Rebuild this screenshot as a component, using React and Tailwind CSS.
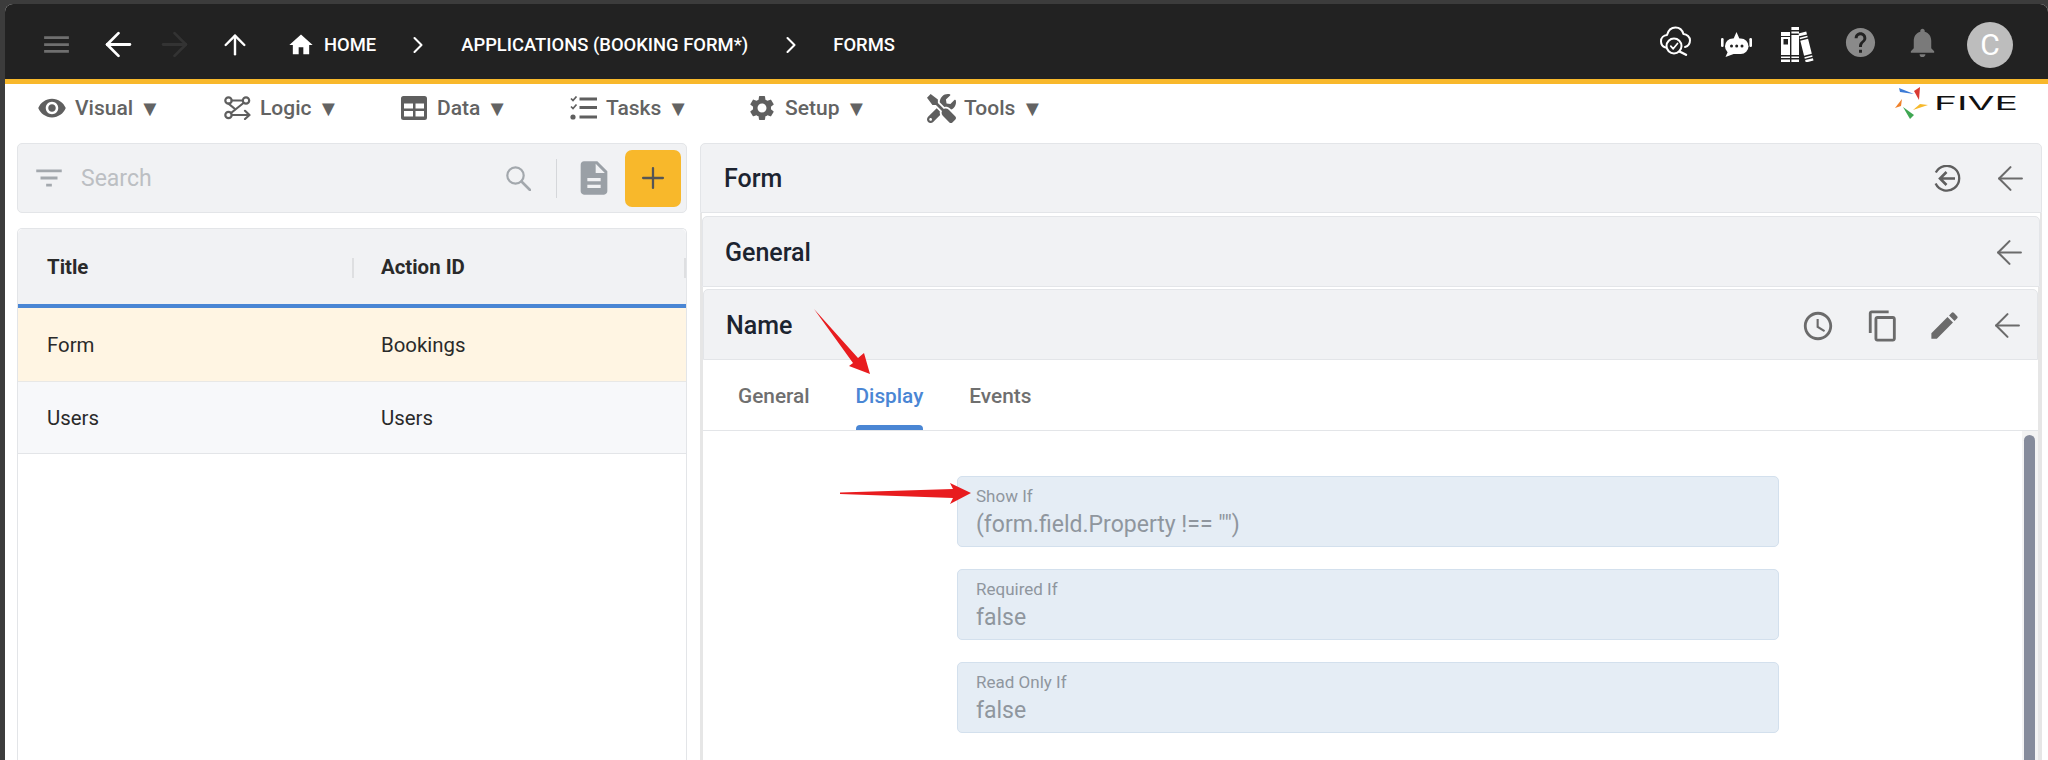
import React from "react";
import {
  MdMenu, MdHome, MdHelp, MdNotifications,
  MdRemoveRedEye, MdSettings, MdFilterList, MdDescription,
  MdOutlineAccessTime, MdContentCopy, MdEdit,
} from "react-icons/md";
import { FaTools } from "react-icons/fa";
import { ChevronRight, ArrowLeft, ArrowRight, ArrowUp, Plus } from "lucide-react";

const CloudIcon = () => (
  <svg width="31" height="30" viewBox="0 0 31 30" fill="none" stroke="#fff" strokeWidth="2" strokeLinecap="round" strokeLinejoin="round">
    <path d="M5.5 21.5C2.5 20.5 1 18 1 15.2C1 11.8 3.6 9.2 7 9C8.2 4.5 11.5 1.5 15.5 1.5C19.5 1.5 22.4 4.3 23.4 8C27 8.2 30 10.8 30 14.3C30 17.8 27.8 20.3 25 21" />
    <circle cx="14" cy="20" r="7.5" />
    <path d="M19.5 25.5L26 28.8" strokeWidth="2.4" />
    <path d="M10.8 20.2L13.2 22.8L17.5 17.5" strokeWidth="1.7" />
  </svg>
);

const BotIcon = () => (
  <svg width="31" height="25" viewBox="0 0 31 25" fill="#fff">
    <path d="M15.5 0L19 8H12Z" />
    <rect x="4" y="6.5" width="23.5" height="15.5" rx="7.7" />
    <path d="M8 17L4.5 25L14 21.5Z" />
    <rect x="0" y="6" width="2.6" height="9" rx="1.2" />
    <rect x="28.4" y="6" width="2.6" height="9" rx="1.2" />
    <circle cx="10.5" cy="14" r="1.5" fill="#222" />
    <circle cx="15.7" cy="14" r="1.5" fill="#222" />
    <circle cx="21" cy="14" r="1.5" fill="#222" />
  </svg>
);

const BooksIcon = () => (
  <svg width="35" height="35" viewBox="0 0 35 35" fill="#fff">
    <path d="M0 5H9V9H0ZM0 10H9V28H0ZM0 29.5H9V31H0ZM0 32.5H9V35H0Z" />
    <rect x="2.5" y="12" width="4.5" height="5.5" fill="#222" />
    <path d="M10.4 0H18V3H10.4ZM10.4 4.5H18V6.5H10.4ZM10.4 8H18V28H10.4ZM10.4 29.5H18V31H10.4ZM10.4 32.5H18V35H10.4Z" />
    <g transform="rotate(-14 25 20)">
      <path d="M21 5H29V8H21ZM21 9.5H29V11H21ZM21 12.5H29V28H21ZM21 29.5H29V31H21ZM21 32.5H29V35H21Z" />
    </g>
  </svg>
);

const LogicIcon = () => (
  <svg width="27" height="24" viewBox="0 0 27 24" fill="none" stroke="#5f5f5f" strokeWidth="2.2" strokeLinejoin="round" strokeLinecap="round">
    <circle cx="4.5" cy="4.5" r="3.2" />
    <circle cx="22" cy="4.5" r="3.2" />
    <circle cx="4.5" cy="19" r="3.2" />
    <path d="M7.7 4.5H18.8" />
    <path d="M19.5 7L7 17" />
    <path d="M7.7 19H25.5M21 14.8L25.5 19L21 23" />
    <path d="M4.5 7.7L11 13" />
  </svg>
);

const TableIcon = () => (
  <svg width="26" height="24" viewBox="0 0 26 24" fill="#5f5f5f">
    <path fillRule="evenodd" d="M2.5 0H23.5A2.5 2.5 0 0 1 26 2.5V21.5A2.5 2.5 0 0 1 23.5 24H2.5A2.5 2.5 0 0 1 0 21.5V2.5A2.5 2.5 0 0 1 2.5 0ZM3 7.5V12.5H12V7.5ZM14.5 7.5V12.5H23V7.5ZM3 15V20.5H12V15ZM14.5 15V20.5H23V15Z" />
  </svg>
);

const TasksIcon = () => (
  <svg width="27" height="24" viewBox="0 0 27 24" fill="#5f5f5f">
    <rect x="9.5" y="1.5" width="17.5" height="3" />
    <rect x="9.5" y="10" width="17.5" height="3" />
    <rect x="9.5" y="19.5" width="17.5" height="3" />
    <path d="M1 2.5L3 4.5L6.5 0.5" fill="none" stroke="#5f5f5f" strokeWidth="1.7" />
    <path d="M1 10.5L3 12.5L6.5 8.5" fill="none" stroke="#5f5f5f" strokeWidth="1.7" />
    <circle cx="3" cy="21" r="2.6" />
  </svg>
);

const CircleBack = () => (
  <svg width="27" height="27" viewBox="0 0 27 27" fill="none" stroke="#5f5f5f" strokeWidth="2.3">
    <path d="M1.8 7.5A12.4 12.4 0 1 1 1.6 18.5" />
    <path d="M21 13.5H6.5M12.5 7L6 13.5L12.5 20" strokeWidth="2.6" />
  </svg>
);

const SearchIcon = () => (
  <svg width="25" height="25" viewBox="0 0 25 25" fill="none" stroke="#a3a8ad" strokeWidth="2.2" strokeLinecap="round" className="ml-auto">
    <circle cx="9.5" cy="9.5" r="8.2" />
    <path d="M15.5 15.5L24 24" strokeWidth="2.6" />
  </svg>
);

const Logo = () => (
  <svg width="124" height="33" viewBox="1894 87 124 33">
    <path d="M1899 88L1914 94L1900 92Z" fill="#3d7bd6" />
    <path d="M1920 87L1914 91L1919 100Z" fill="#d93a32" />
    <path d="M1928 105L1920 104L1913 110Z" fill="#f6b92c" />
    <path d="M1903 107L1914 115L1910 119Z" fill="#3fa652" />
    <path d="M1895 108L1902 99L1901 106Z" fill="#f0812a" />
    <text x="1934" y="110" fontSize="18" textLength="84" lengthAdjust="spacingAndGlyphs" fill="#111" className="font-['Inter'] font-normal">FIVE</text>
  </svg>
);

const Annotations = () => (
  <svg className="absolute left-0 top-0 pointer-events-none" width="2048" height="760" viewBox="0 0 2048 760" fill="#e81c1f">
    <path d="M814 309L858 358L864 353L870 374L849 366L853 363Z" />
    <path d="M840 492.5L953 489L950 483L971 493L950 504L953 498L840 494Z" />
  </svg>
);

const menu = [
  { label: "Visual", w: "w-[185px]", icon: <MdRemoveRedEye size={32} color="#5f5f5f" /> },
  { label: "Logic", w: "w-[177px]", icon: <LogicIcon /> },
  { label: "Data", w: "w-[169px]", icon: <TableIcon /> },
  { label: "Tasks", w: "w-[179px]", icon: <TasksIcon /> },
  { label: "Setup", w: "w-[179px]", icon: <MdSettings size={34} color="#5f5f5f" /> },
  { label: "Tools", w: "w-[180px]", icon: <FaTools size={29} color="#5f5f5f" /> },
];

const PanelArrow = () => <ArrowLeft size={39} color="#6b6b6b" strokeWidth={1.3} />;

const PanelHeader = ({ title, children, outer }) => (
  <div className={`bg-white ${outer}`}>
    <div className="flex items-center justify-between h-full rounded-t-[5px] border border-[#e3e5e8] bg-[#f1f2f4]">
      <span className="text-[25px] font-medium text-[#1c2430] leading-none">{title}</span>
      <div className="flex items-center">{children}</div>
    </div>
  </div>
);

const Field = ({ label, value }) => (
  <div className="h-[71px] rounded-[5px] border border-[#d3e0ed] bg-[#e5edf5] pl-[18px] pt-[9px]">
    <div className="text-[17px] leading-[20px] text-[#8f969e]">{label}</div>
    <div className="text-[23px] leading-[28px] mt-[5px] text-[#8f969e]">{value}</div>
  </div>
);

export default function App() {
  return (
    <div className="relative w-[2048px] h-[760px] overflow-hidden bg-[#3c3c3c] pt-[4px] pl-[5px] font-['Roboto',sans-serif]">
      <div className="flex flex-col h-full bg-white rounded-t-[8px]">
        {/* top bar */}
        <div className="flex items-center h-[80px] pt-[6px] border-b-[5px] border-[#f8b82b] bg-[#222222] rounded-t-[8px] text-white text-[18.4px] font-medium">
          <MdMenu size={33} color="#6f6f6f" className="ml-[35px]" />
          <ArrowLeft size={39} color="#fff" strokeWidth={1.7} className="ml-[26px]" />
          <ArrowRight size={39} color="#333" strokeWidth={1.7} className="ml-[17px]" />
          <ArrowUp size={32} color="#fff" strokeWidth={1.8} className="ml-[25px]" />
          <MdHome size={28} color="#fff" className="ml-[36px]" />
          <span className="ml-[9px]">HOME</span>
          <ChevronRight size={28} color="#fff" strokeWidth={1.8} className="ml-[28px]" />
          <span className="ml-[29px]">APPLICATIONS (BOOKING FORM*)</span>
          <ChevronRight size={28} color="#fff" strokeWidth={1.8} className="ml-[29px]" />
          <span className="ml-[28px]">FORMS</span>
          <div className="ml-auto flex items-center pr-[35px]">
            <div className="mb-[8px]"><CloudIcon /></div>
            <div className="ml-[30px]"><BotIcon /></div>
            <div className="ml-[29px]"><BooksIcon /></div>
            <MdHelp size={35} color="#8a8a8a" className="ml-[27px] mb-[4px]" />
            <MdNotifications size={35} color="#7a7a7a" className="ml-[27px] mb-[4px]" />
            <div className="ml-[27px] flex items-center justify-center w-[46px] h-[46px] rounded-full bg-[#bdbdbd] text-[30px] font-normal">C</div>
          </div>
        </div>

        {/* menu bar */}
        <div className="flex items-center h-[59px] pb-[11px] pl-[32px] pr-[30px] text-[21px] font-medium text-[#636363]">
          {menu.map((m) => (
            <div key={m.label} className={`flex items-center ${m.w}`}>
              <div className="flex items-center justify-center w-[30px]">{m.icon}</div>
              <span className="ml-[8px] pt-[2px]">{m.label}</span>
              <span className="ml-[6px] pt-[2px] text-[22px] leading-none">▼</span>
            </div>
          ))}
          <div className="ml-auto mb-[10px]"><Logo /></div>
        </div>

        {/* body */}
        <div className="flex flex-1 min-h-0 pl-[12px] gap-[13px]">
          {/* left */}
          <div className="flex flex-col w-[670px]">
            <div className="flex items-center h-[70px] rounded-[5px] border border-[#e3e5e8] bg-[#f1f2f4]">
              <MdFilterList size={34} color="#a3a8ad" className="ml-[14px]" />
              <span className="ml-[15px] mt-[2px] text-[23px] text-[#bcbfc3]">Search</span>
              <SearchIcon />
              <div className="ml-[25px] w-px h-[39px] bg-[#d5d7da]" />
              <MdDescription size={40} color="#9aa0a6" className="ml-[17px]" />
              <div className="ml-[11px] mr-[5px] flex items-center justify-center w-[56px] h-[57px] rounded-[7px] bg-[#f8b82b]">
                <Plus size={34} color="#555" strokeWidth={1.6} />
              </div>
            </div>
            <div className="mt-[15px] flex-1 rounded-t-[5px] border border-b-0 border-[#e3e5e8] text-[20.4px] text-[#2a2a2a]">
              <div className="flex items-center h-[75px] pt-[2px] rounded-t-[5px] bg-[#f1f2f4] font-bold">
                <span className="ml-[29px] w-[305px]">Title</span>
                <div className="w-[2px] h-[20px] bg-[#dedfe1]" />
                <span className="ml-[27px] flex-1">Action ID</span>
                <div className="w-[2px] h-[20px] bg-[#dedfe1]" />
              </div>
              <div className="h-[4px] bg-[#4a86d4]" />
              <div className="flex items-center h-[74px] pt-[2px] border-b border-[#e8e8e6] bg-[#fff5e3]">
                <span className="ml-[29px] w-[334px]">Form</span>
                <span>Bookings</span>
              </div>
              <div className="flex items-center h-[72px] pt-[2px] border-b border-[#e3e5e8] bg-[#f7f8fa]">
                <span className="ml-[29px] w-[334px]">Users</span>
                <span>Users</span>
              </div>
            </div>
          </div>

          {/* right */}
          <div className="flex flex-col flex-1 mr-[6px] bg-[#e6e6e6]">
            <PanelHeader title="Form" outer="h-[70px] shrink-0 [&>div]:pl-[23px] [&>div]:pr-[11px]">
              <CircleBack />
              <div className="ml-[30px]"><PanelArrow /></div>
            </PanelHeader>
            <div className="flex flex-col flex-1 min-h-0 px-[2px]">
              <PanelHeader title="General" outer="h-[74px] shrink-0 pt-[3px] [&>div]:pl-[22px] [&>div]:pr-[10px] [&>div]:pt-[2px]">
                <PanelArrow />
              </PanelHeader>
              <div className="flex flex-col flex-1 min-h-0 pl-[1px] pr-[2px]">
                <PanelHeader title="Name" outer="h-[73px] shrink-0 pt-[2px] [&>div]:pl-[22px] [&>div]:pr-[10px] [&>div]:pt-[2px]">
                  <MdOutlineAccessTime size={34} color="#6b6b6b" />
                  <MdContentCopy size={34} color="#6b6b6b" className="ml-[31px]" />
                  <MdEdit size={35} color="#6b6b6b" className="ml-[27px]" />
                  <div className="ml-[26px]"><PanelArrow /></div>
                </PanelHeader>
                <div className="flex items-end h-[71px] shrink-0 bg-white border-b border-[#e3e5e8] text-[20.8px] font-medium text-[#6f6f6f]">
                  <div className="ml-[35px] h-full flex items-center pt-[4px]">General</div>
                  <div className="ml-[46px] relative h-full flex items-center pt-[4px] text-[#4a86d4]">
                    Display
                    <div className="absolute left-0 right-0 bottom-0 h-[5px] rounded-t-[4px] bg-[#4a86d4]" />
                  </div>
                  <div className="ml-[46px] h-full flex items-center pt-[4px]">Events</div>
                </div>
                <div className="flex flex-1 min-h-0 bg-white">
                  <div className="flex-1 pt-[45px] pl-[254px]">
                    <div className="flex flex-col gap-[22px] w-[822px]">
                      <Field label="Show If" value={'(form.field.Property !== "")'} />
                      <Field label="Required If" value="false" />
                      <Field label="Read Only If" value="false" />
                    </div>
                  </div>
                  <div className="w-[16px] bg-[#f3f3f3] pt-[4px] pl-[2px] pr-[3px]">
                    <div className="h-full rounded-t-full bg-[#858b9b]" />
                  </div>
                </div>
              </div>
            </div>
          </div>
        </div>
      </div>
      <Annotations />
    </div>
  );
}
